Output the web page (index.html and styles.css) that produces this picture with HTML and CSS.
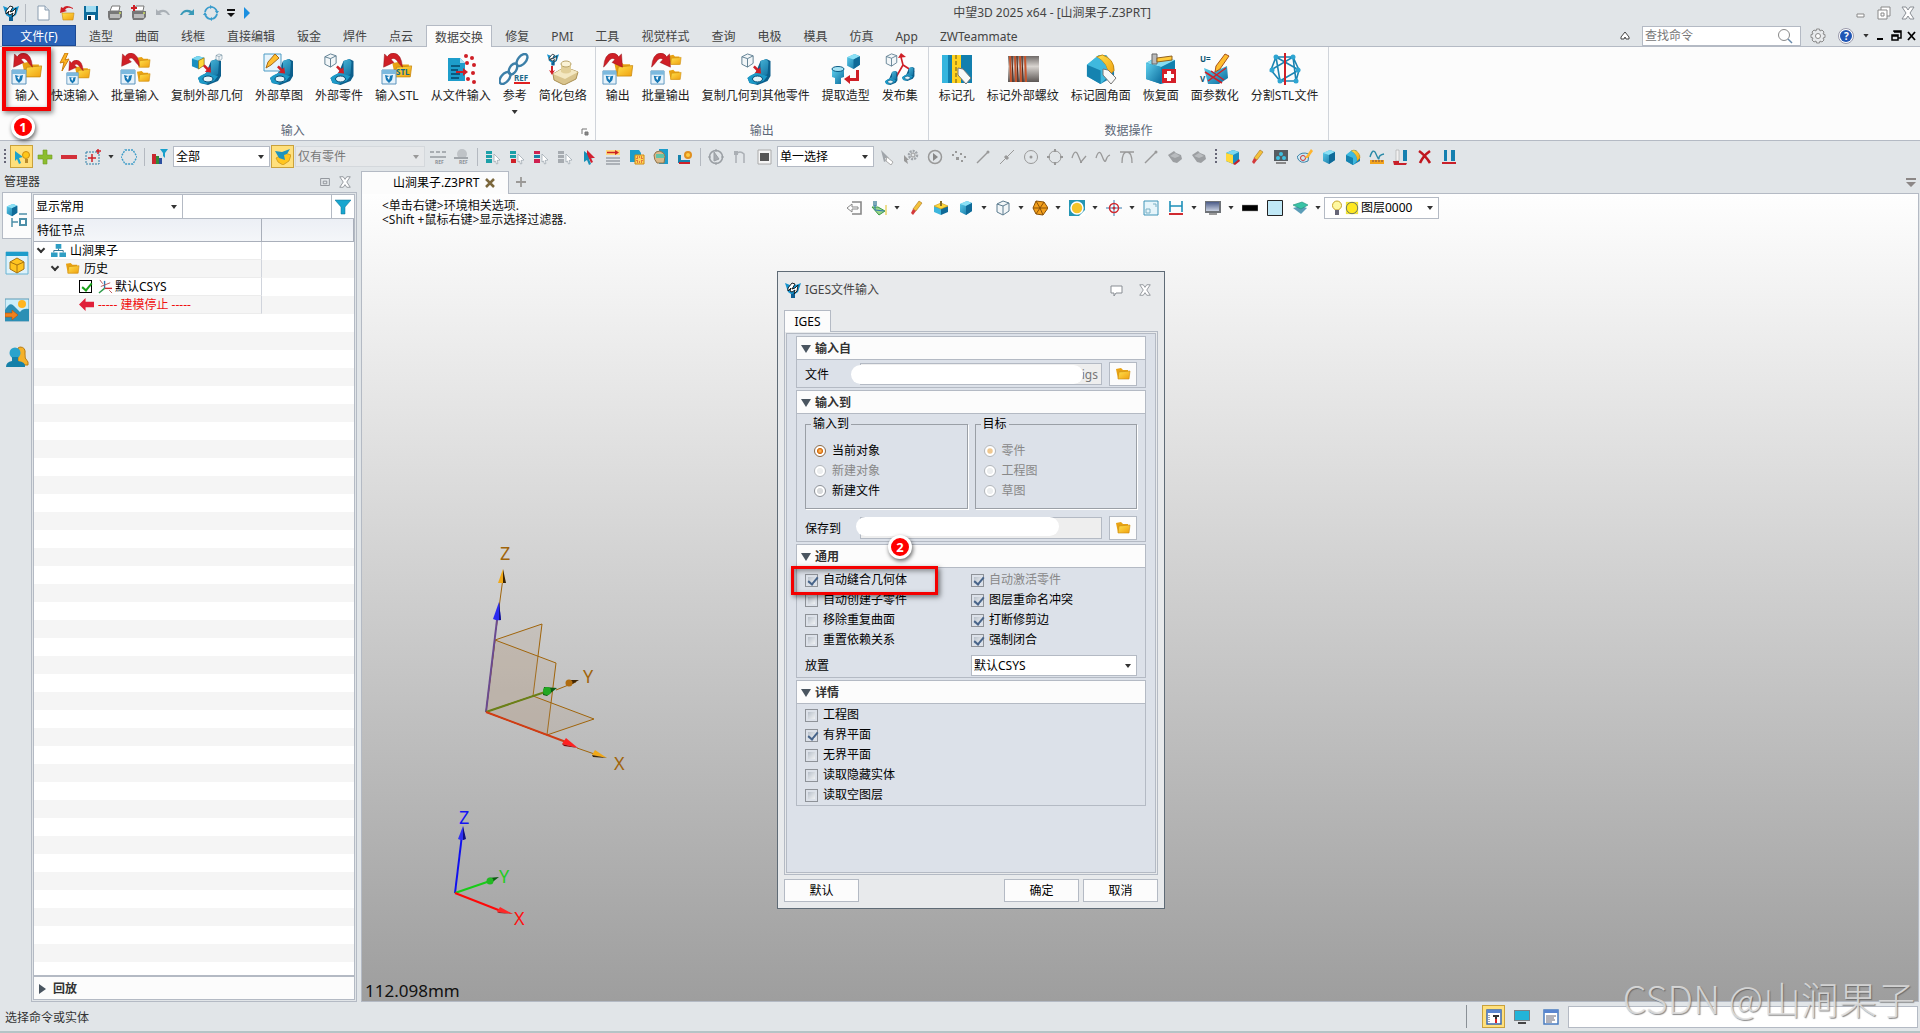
FILE: index.html
```html
<!DOCTYPE html>
<html lang="zh-CN">
<head>
    <meta charset="UTF-8">
    <meta name="viewport" content="width=device-width, initial-scale=1.0">
    <title>中望3D 2025 x64 - [山涧果子.Z3PRT]</title>
    <link rel="stylesheet" href="styles.css">
</head>
<body>
    <!-- 图标定义 -->
    <svg class="defs" width="0" height="0" aria-hidden="true">
        <defs>
            <linearGradient id="gBlue" x1="0" y1="0" x2="1" y2="1"><stop offset="0" stop-color="#5fd0ee"/><stop offset="1" stop-color="#0b6b9c"/></linearGradient>
            <linearGradient id="gGold" x1="0" y1="0" x2="1" y2="1"><stop offset="0" stop-color="#ffe14d"/><stop offset="1" stop-color="#f0a010"/></linearGradient>
            <linearGradient id="gSteel" x1="0" y1="0" x2="0" y2="1"><stop offset="0" stop-color="#6f6a68"/><stop offset=".4" stop-color="#d8d4d0"/><stop offset="1" stop-color="#5c5654"/></linearGradient>
            <linearGradient id="gScreen" x1="0" y1="0" x2="0" y2="1"><stop offset="0" stop-color="#4c5c88"/><stop offset="1" stop-color="#c8d0e0"/></linearGradient>
        </defs>
        <symbol id="logo" viewBox="0 0 16 16"><path d="M0 1l5 2 3-2 3 2 5-2-3 9-3 2v3H6v-3l-3-2z" fill="#1493cf"/><path d="M6 12h4v4H6z" fill="#0d5f93"/><path d="M3 6l4-5 3 1-3 5 3-1 3-3-1 6-3 3 1-4-3 2-2-1 1-3-3 3z" fill="#fff" stroke="#111" stroke-width=".9"/></symbol>
        <symbol id="cube" viewBox="0 0 16 16"><path d="M2 4l7-3 5 2v8l-6 4-6-3z" fill="url(#gBlue)"/><path d="M2 4l7-3 5 2-6 3z" fill="#8be0f5"/><path d="M8 6l6-3v8l-6 4z" fill="#0f6a98"/></symbol>
        <symbol id="cube-gold" viewBox="0 0 16 16"><path d="M1 4l7-3 6 2v9l-6 3-7-3z" fill="#1a8fc0"/><path d="M1 4l7-3 6 2-6 3z" fill="#7bd8f0"/><path d="M1 4l7 2v9l-7-3z" fill="#ffd83a"/><path d="M8 15l6-5 1 2-5 4z" fill="#c3202a"/></symbol>
        <symbol id="cube-face" viewBox="0 0 16 16"><path d="M1 4l6-3 7 2v8l-6 4-7-3z" fill="#1a8fc0"/><path d="M1 4l6-3 7 2-6 3z" fill="#7bd8f0"/><path d="M8 6l6-3v8l-6 4z" fill="#ffd83a" stroke="#8a6a10" stroke-width=".7"/></symbol>
        <symbol id="cube-top" viewBox="0 0 16 16"><path d="M1 6l7 2v7l-7-3z" fill="#3db6dd"/><path d="M8 8l7-2v6l-7 3z" fill="#0f6a98"/><path d="M1 6l7-3 7 3-7 3z" fill="#ffd83a" stroke="#c79310" stroke-width=".6"/><path d="M7 1h2v5H7z" fill="#8a6d20"/></symbol>
        <symbol id="cube-half" viewBox="0 0 16 16"><path d="M1 6l6-5 4 0 4 6v5l-7 4-7-4z" fill="url(#gBlue)"/><path d="M6 2l3-1q6 2 6 8l-3 3q0-7-6-10z" fill="url(#gGold)" stroke="#c98a10" stroke-width=".5"/><path d="M1 6l5-4q6 3 6 10l-4 4V9z" fill="#3fb9de"/><path d="M1 6l7 3v7l-7-4z" fill="#1583b0"/></symbol>
        <symbol id="cube-line" viewBox="0 0 16 16"><path d="M2 4l6-3 6 2v8l-6 4-6-3z" fill="#f2f6f8" stroke="#5d7d90"/><path d="M2 4l6 2 6-3M8 6v9" fill="none" stroke="#5d7d90"/></symbol>
        <symbol id="folder" viewBox="0 0 16 16"><path d="M1 3l5-1 2 2h5v9H3z" fill="#e8a213"/><path d="M4 6l11-1-1 8H3z" fill="url(#gGold)" stroke="#c98a10" stroke-width=".6"/></symbol>
        <symbol id="docbox" viewBox="0 0 16 16"><path d="M1 1h14v14H1z" fill="#e6f2fa" stroke="#5a93bd"/><path d="M1 1h14v4H1z" fill="#7cb9de"/><path d="M4 6l4 1 4-1-1 5-3 3-3-3z" fill="#1678b5"/><path d="M6 8l3-1-1 4z" fill="#fff"/></symbol>
        <symbol id="bracket" viewBox="0 0 24 26"><path d="M13 2l6-2 4 2v15l-3 5-10 4-8-2-2-5 8-5z" fill="#0c5f8c"/><path d="M13 2l6-2 2 3-1 12-8 5-12 0 8-6 5-3z" fill="url(#gBlue)"/><path d="M0 19q5-5 12-4l8 2-4 5-8 3-6-1z" fill="#1c9ac8"/><ellipse cx="10" cy="20" rx="5" ry="3" fill="#e4f4fa" stroke="#0b4d73"/></symbol>
        <symbol id="redarc" viewBox="0 0 20 18"><path d="M20 15Q19 1 11 0 6 0 4 4L1 1 0 15 11 10 8 7Q11 4 14 8 16 11 20 15z" fill="#cf1f26" stroke="#8f1218" stroke-width=".5"/></symbol>
        <symbol id="redto" viewBox="0 0 10 10"><path d="M0 2L2 0l4 4 2-2 1 7-7-1 2-2z" fill="#cf1f26"/></symbol>

        <symbol id="import" viewBox="0 0 32 32"><use href="#folder" x="10" y="6" width="22" height="22"/><use href="#redarc" x="2" y="0" width="20" height="17"/><use href="#docbox" x="0" y="16" width="16" height="16"/></symbol>
        <symbol id="quick" viewBox="0 0 32 32"><path d="M6 0L1 10l4-1-2 9L10 6 6 7l3-7z" fill="#ffb51f" stroke="#c77b10"/><use href="#folder" x="15" y="11" width="17" height="17"/><use href="#redarc" x="9" y="7" width="16" height="13"/><use href="#docbox" x="7" y="19" width="13" height="13"/></symbol>
        <symbol id="batch" viewBox="0 0 32 32"><use href="#folder" x="17" y="2" width="15" height="15"/><use href="#folder" x="17" y="16" width="15" height="15"/><use href="#redarc" x="2" y="0" width="19" height="16"/><use href="#docbox" x="1" y="16" width="16" height="16"/></symbol>
        <symbol id="copygeo" viewBox="0 0 32 32"><use href="#bracket" x="6" y="6" width="26" height="26"/><use href="#cube-face" x="0" y="2" width="15" height="15"/><use href="#cube-line" x="24" y="0" width="8" height="9"/><use href="#redto" x="12" y="11" width="9" height="10"/></symbol>
        <symbol id="sketch" viewBox="0 0 32 32"><use href="#bracket" x="6" y="6" width="26" height="26"/><path d="M1 1h17v17H1z" fill="#e6f4fc" stroke="#4f9cc5"/><path d="M3 15l2-6 7-8 4 4-8 7z" fill="#ffbd2e" stroke="#a86a18"/><use href="#redto" x="14" y="12" width="9" height="10"/></symbol>
        <symbol id="part" viewBox="0 0 32 32"><use href="#bracket" x="7" y="6" width="25" height="26"/><use href="#cube-line" x="0" y="0" width="15" height="15"/><use href="#redto" x="13" y="12" width="9" height="10"/></symbol>
        <symbol id="stl" viewBox="0 0 32 32"><use href="#import" width="32" height="32"/><text x="15" y="22" font-size="8" font-weight="700" fill="#0c6a8c">STL</text></symbol>
        <symbol id="fromfile" viewBox="0 0 32 32"><path d="M3 5h12l5 5v18H3z" fill="#1d9dcb"/><path d="M15 5v5h5" fill="#a9e2f4"/><path d="M6 13h9M6 17h7M6 21h9M6 25h8" stroke="#0a5a80" stroke-width="2"/><path d="M11 18h7v-3l5 4-5 4v-3h-7z" fill="#cf1f26"/><g fill="#cf1f26"><circle cx="21" cy="3" r="2"/><circle cx="27" cy="5" r="2"/><circle cx="22" cy="10" r="2"/><circle cx="29" cy="12" r="2"/><circle cx="28" cy="20" r="2"/><circle cx="23" cy="26" r="2"/><circle cx="29" cy="29" r="2"/></g></symbol>
        <symbol id="ref" viewBox="0 0 32 32"><g fill="none" stroke="#3c7fa8" stroke-width="2.4"><ellipse cx="23" cy="7" rx="4" ry="7" transform="rotate(40 23 7)"/><ellipse cx="14" cy="16" rx="3.500" ry="6" transform="rotate(30 14 16)"/><ellipse cx="6" cy="25" rx="4" ry="7" transform="rotate(40 6 25)"/></g><text x="15" y="28" font-size="8" font-weight="700" fill="#1f6a8a">REF</text><path d="M15 30h16" stroke="#e02020" stroke-width="2"/></symbol>
        <symbol id="simplify" viewBox="0 0 32 32"><path d="M6 21l12-7 13 5-2 7-12 6-10-5z" fill="#d9c48d" stroke="#a98f52"/><path d="M6 21l12-7 13 5-13 7z" fill="#f4e8c2"/><path d="M14 11v8q5 3 10 0v-8z" fill="#e2cf98"/><ellipse cx="19" cy="11" rx="5" ry="3" fill="#fbf3d6" stroke="#b9a369"/><use href="#logo" x="0" y="0" width="12" height="13"/><path d="M4 13v5l-2-1 3 5 3-5-2 1v-5z" fill="#cf1f26"/></symbol>
        <symbol id="export" viewBox="0 0 32 32"><use href="#folder" x="11" y="6" width="21" height="21"/><use href="#redarc" x="-21" y="0" width="20" height="17" transform="scale(-1 1)"/><use href="#docbox" x="0" y="17" width="15" height="15"/></symbol>
        <symbol id="batchout" viewBox="0 0 32 32"><use href="#folder" x="18" y="0" width="14" height="14"/><use href="#folder" x="18" y="15" width="14" height="14"/><use href="#redarc" x="-21" y="0" width="20" height="17" transform="scale(-1 1)"/><use href="#docbox" x="0" y="17" width="15" height="15"/></symbol>
        <symbol id="extract" viewBox="0 0 32 32"><use href="#cube" x="15" y="0" width="17" height="17"/><path d="M2 16h12v8l-3 1v6H5v-6l-3-1z" fill="url(#gBlue)"/><ellipse cx="8" cy="16" rx="6" ry="2.500" fill="#a5e3f4" stroke="#0b5b86"/><path d="M26 17h3v11H20v3l-6-5 6-4v3h6z" fill="#cf1f26"/></symbol>
        <symbol id="publish" viewBox="0 0 32 32"><path d="M11 26L19 12l11 7M19 12l-2-8" fill="none" stroke="#cf1f26" stroke-width="1.600"/><path d="M14 5l3-5 5 4z" fill="#cf1f26"/><use href="#cube-line" x="0" y="0" width="15" height="14"/><use href="#bracket" x="0" y="18" width="15" height="14"/><use href="#bracket" x="17" y="14" width="15" height="14"/></symbol>
        <symbol id="hole" viewBox="0 0 32 32"><path d="M1 2h30v28H1z" fill="#127fae"/><path d="M1 2h6v28H1z" fill="#35b5de"/><path d="M11 2h9v28h-9z" fill="#ffd21f"/><path d="M15 2v28" stroke="#6a5410" stroke-dasharray="4 2"/><path d="M17 15l5 1 8 9-5 6-8-9z" fill="#f8f8f8" stroke="#777"/></symbol>
        <symbol id="thread" viewBox="0 0 32 32"><path d="M1 3h31v26H1z" fill="url(#gSteel)"/><path d="M3 3l1 26M8 3l1 26M13 3l1 26M18 3l1 26" stroke="#c8562c" stroke-width="2"/><path d="M5 3l1 26M10 3l1 26M15 3l1 26" stroke="#4c2418"/></symbol>
        <symbol id="fillet" viewBox="0 0 32 32"><use href="#cube-half" width="31" height="31"/><path d="M18 16l5 1 8 8-5 6-8-9z" fill="#f8f8f8" stroke="#777"/></symbol>
        <symbol id="heal" viewBox="0 0 32 32"><path d="M1 10l9-5 20 2v20l-14 4-15-5z" fill="#1280ae"/><path d="M1 10l9-5 20 2-14 7z" fill="#86dcf2"/><path d="M1 10l15 4v17L1 26z" fill="url(#gBlue)"/><path d="M7 1h5v10H7z" fill="#bbb" stroke="#666"/><path d="M12 5l15-2v4L12 9z" fill="#ffca3a" stroke="#906020"/><path d="M17 16h14v14H17z" fill="#d5202a"/><path d="M22 18h4v3h3v4h-3v3h-4v-3h-3v-4h3z" fill="#fff"/></symbol>
        <symbol id="param" viewBox="0 0 32 32"><path d="M5 15l10 4 13-6 1 12-9 6H9z" fill="url(#gBlue)"/><path d="M6 19l17 11M9 28l18-13M12 18l13 9" stroke="#cf1f26" stroke-width="1.500"/><path d="M16 19l1-6L26 1l4 2-9 13z" fill="#ffbd2e" stroke="#a8541a"/><text x="1" y="9" font-size="8" font-weight="700" fill="#0c5573">U=</text><text x="1" y="29" font-size="8" font-weight="700" fill="#0c5573">V</text></symbol>
        <symbol id="split" viewBox="0 0 32 32"><path d="M7 4h17l6 13-3 11H11L2 17zM7 4l4 24 19-11L7 4 2 17l22-13 3 24" fill="none" stroke="#1a84b2" stroke-width="1.600"/><g fill="#2ea5d2"><circle cx="7" cy="4" r="2.500"/><circle cx="24" cy="4" r="2.500"/><circle cx="29" cy="17" r="2.500"/><circle cx="27" cy="28" r="2.500"/><circle cx="11" cy="28" r="2.500"/><circle cx="3" cy="17" r="2.500"/></g><path d="M16 0v32" stroke="#cf1f26" stroke-width="2"/></symbol>

        <symbol id="new" viewBox="0 0 16 16"><path d="M3 1h7l4 4v10H3z" fill="#fff" stroke="#8a9db0"/><path d="M10 1v4h4" fill="#dde6ee" stroke="#8a9db0"/></symbol>
        <symbol id="open" viewBox="0 0 16 16"><path d="M3 8h12l-1 7H4z" fill="url(#gGold)" stroke="#c98a10" stroke-width=".6"/><path d="M14 4Q8 1 6 5l2 1-7 2 1-6 2 1q3-4 10 0z" fill="#cf1f26"/></symbol>
        <symbol id="save" viewBox="0 0 16 16"><path d="M1 1h14v14H1z" fill="#0c6a9a"/><path d="M3 1h10v6H3z" fill="#9fdcf2"/><path d="M4 10h8v5H4z" fill="#fff"/><path d="M5 11h3v4H5z" fill="#123"/></symbol>
        <symbol id="print" viewBox="0 0 16 16"><path d="M5 1h8l-1 5H3z" fill="#fff" stroke="#777"/><path d="M1 6h14v6l-3 3H2l-1-3z" fill="#777"/><path d="M3 9h10v4H3z" fill="#bbb"/><circle cx="13" cy="8" r="1" fill="#cce060"/></symbol>
        <symbol id="print-add" viewBox="0 0 16 16"><use href="#print" width="16" height="16"/><path d="M2 0h2v2h2v2H4v2H2V4H0V2h2z" fill="#cf1f26"/></symbol>
        <symbol id="undo" viewBox="0 0 16 16"><path d="M1 4v6h6L5 8q5-3 8 2h2Q11 2 3 6z" fill="#aab0b6"/></symbol>
        <symbol id="redo" viewBox="0 0 16 16"><path d="M15 4v6H9l2-2Q6 5 3 10H1Q5 2 13 6z" fill="#3a9ab8"/></symbol>
        <symbol id="refresh" viewBox="0 0 16 16"><path d="M9 2q4 1 5 5M14 9q-1 4-5 5M7 14q-4-1-5-5M2 7q1-4 5-5" fill="none" stroke="#3a9ccc" stroke-width="1.800"/><path d="M12 6h4l-2 3zM9 12v4l-3-2zM0 10h4L2 7zM7 0v4l3-2z" fill="#3a9ccc"/></symbol>
        <symbol id="dotcaret" viewBox="0 0 16 16"><path d="M4 4h8v2H4zM4 8h8l-4 4z" fill="#111"/></symbol>
        <symbol id="play" viewBox="0 0 16 16"><path d="M5 2l6 6-6 6z" fill="#1a8fe0"/></symbol>
        <symbol id="win-min" viewBox="0 0 16 16"><path d="M5 9h7v3H5z" fill="#fff" stroke="#888"/></symbol>
        <symbol id="win-max" viewBox="0 0 16 16"><path d="M5 2h9v9h-3v3H2V5h3z" fill="#fff" stroke="#888"/><path d="M5 5h6v6M5 8h3v3H5z" fill="none" stroke="#888"/></symbol>
        <symbol id="win-x" viewBox="0 0 16 16"><path d="M2 2h4l2 3 2-3h4l-4 6 4 6h-4l-2-3-2 3H2l4-6z" fill="#fff" stroke="#8a8f95"/></symbol>
        <symbol id="mdi-min" viewBox="0 0 16 16"><path d="M5 10h6v2H5z"/></symbol>
        <symbol id="mdi-max" viewBox="0 0 16 16"><path d="M6 4V3h7v7h-3M6 4h7M4 7h6v5H4zM4 8h6" fill="none" stroke="#000" stroke-width="1.500"/></symbol>
        <symbol id="mdi-x" viewBox="0 0 16 16"><path d="M4 4l7 8M11 4l-7 8" stroke="#000" stroke-width="1.800"/></symbol>
        <symbol id="home" viewBox="0 0 16 16"><path d="M4 9l4-5 4 5v2H9L8 9l-1 2H4z" fill="#fff" stroke="#444"/></symbol>
        <symbol id="search" viewBox="0 0 16 16"><circle cx="7" cy="7" r="5.500" fill="none" stroke="#888"/><path d="M11 11l4 4" stroke="#68a" stroke-width="1.500"/></symbol>
        <symbol id="gear" viewBox="0 0 16 16"><path d="M6.500 1h3l.5 2 2-1 2 2-1 2 2 .5v3L13 10l1 2-2 2-2-1-.5 2h-3L6 13l-2 1-2-2 1-2-2-.5v-3L3 6 2 4l2-2 2 1z" fill="#e8eaec" stroke="#8a8a8a"/><circle cx="8" cy="8" r="2.500" fill="#fff" stroke="#8a8a8a"/></symbol>
        <symbol id="help" viewBox="0 0 16 16"><circle cx="8" cy="8" r="7.500" fill="#fff" stroke="#99a"/><circle cx="8" cy="8" r="6" fill="#1f56b5"/><text x="6" y="12" font-size="10" font-weight="700" fill="#fff">?</text></symbol>

        <symbol id="bulb-sel" viewBox="0 0 16 16"><path d="M1 2l8 6-4 1 2 5-2 1-2-5-2 2z" fill="#1ba3cc"/><circle cx="12" cy="6" r="3.500" fill="#ffc61a" stroke="#d08f10"/><path d="M11 10h3v4h-3z" fill="#b98a2a"/></symbol>
        <symbol id="plus" viewBox="0 0 16 16"><path d="M6 1h4v5h5v4h-5v5H6v-5H1V6h5z" fill="#8cbd2f" stroke="#6f9a22" stroke-width=".6"/></symbol>
        <symbol id="minus" viewBox="0 0 16 16"><path d="M0 6h16v4H0z" fill="#d3303a"/></symbol>
        <symbol id="selbox" viewBox="0 0 16 16"><path d="M1 3h13v12H1z" fill="none" stroke="#3080a8" stroke-dasharray="2 1"/><path d="M7 5v8M3 9h8M13 0v5M11 2h5" stroke="#d02028" stroke-width="1.500"/></symbol>
        <symbol id="hexsel" viewBox="0 0 16 16"><path d="M4 1h8l4 7-4 7H4L0 8z" fill="none" stroke="#3d9cc8" stroke-width="1.400" stroke-dasharray="2 1"/></symbol>
        <symbol id="barfilter" viewBox="0 0 16 16"><path d="M0 5h4v10H0z" fill="#c9282e"/><path d="M4 7h3v8H4z" fill="#2e8a3a"/><path d="M7 9h3v6H7z" fill="#2c4fa0"/><path d="M8 0h8l-3 4v5l-2-2V4z" fill="#18a0cc"/></symbol>
        <symbol id="partsel" viewBox="0 0 16 16"><path d="M1 9l9-5 6 2-2 6-6 4-5-3z" fill="#ffc51f" stroke="#b98312" stroke-width=".6"/><path d="M0 2l7 1 8-3-3 5-3 1 1 5-6-2z" fill="#1d93bd"/></symbol>
        <symbol id="chain-g" viewBox="0 0 16 16"><path d="M0 3h4M6 3h4M12 3h4M0 8h16" stroke="#a8adb2" stroke-width="2"/><text x="5" y="15" font-size="5" font-weight="700" fill="#8d9298">REF</text></symbol>
        <symbol id="dome-g" viewBox="0 0 16 16"><circle cx="8" cy="5" r="5" fill="#bfc3c7"/><path d="M0 8h14v2H0z" fill="#a0a5aa"/><text x="5" y="15" font-size="5" font-weight="700" fill="#8d9298">REF</text></symbol>
        <symbol id="cur-w" viewBox="0 0 16 16"><path d="M9 5l6 6-3 .5 1 3-1.500.5-1-3L9 13z" fill="#fff" stroke="#9aa4ac" stroke-width=".7"/></symbol>
        <symbol id="list-a" viewBox="0 0 16 16"><path d="M1 2h6v3H1zM1 6h6v3H1zM1 10h6v4H1z" fill="#1ca0a8"/><use href="#cur-w" width="16" height="16"/></symbol>
        <symbol id="list-b" viewBox="0 0 16 16"><path d="M1 2h6v3H1zM1 6h6v3H1z" fill="#1ca0a8"/><path d="M2 10h5v4H2z" fill="#cf2028"/><use href="#cur-w" width="16" height="16"/></symbol>
        <symbol id="list-c" viewBox="0 0 16 16"><path d="M1 2h6v3H1zM1 10h6v4H1z" fill="#cf2050"/><path d="M1 6h6v3H1z" fill="#1c80a8"/><use href="#cur-w" width="16" height="16"/></symbol>
        <symbol id="list-g" viewBox="0 0 16 16"><path d="M1 2h6v3H1zM1 6h6v3H1zM1 10h6v4H1z" fill="#a6abb0"/><use href="#cur-w" width="16" height="16"/></symbol>
        <symbol id="cur-red" viewBox="0 0 16 16"><path d="M3 2l9 7-4 1 2 5-2 1-2-5-3 2z" fill="#1790b8"/><path d="M6 1l8 8-4 0 2 4-2 1-4-9z" fill="#d32030"/></symbol>
        <symbol id="lines" viewBox="0 0 16 16"><path d="M1 1h14v5H1z" fill="#ffd97a"/><path d="M2 3.500h9" stroke="#c22" stroke-width="1.500"/><path d="M10 1l4 2.500L10 6z" fill="#c22"/><path d="M1 9h14M1 12h14M1 15h14" stroke="#9aa0a6" stroke-width="1.500"/></symbol>
        <symbol id="sheet-sel" viewBox="0 0 16 16"><path d="M1 1h9l2 3v9H1z" fill="#1d9dcb"/><path d="M6 6h9v9H6z" fill="#ffd35a" stroke="#d08a10"/><path d="M8 8h5v5H8z" fill="none" stroke="#c22" stroke-dasharray="1 1"/></symbol>
        <symbol id="sheet-hand" viewBox="0 0 16 16"><path d="M6 0h9v15H6z" fill="#1d9dcb"/><path d="M1 6q1-4 6-4 4 1 5 5l-1 7H4q-3-3-3-8z" fill="#d9b98a" stroke="#8f744c"/><path d="M3 5h8v4H3z" fill="#62c4a8"/></symbol>
        <symbol id="gear-l" viewBox="0 0 16 16"><path d="M1 6h3v5h9v3H1z" fill="#1783ac"/><path d="M2 13h11v2H2z" fill="#cf2028"/><circle cx="11" cy="6" r="3" fill="#ffcc44" stroke="#e09020" stroke-width="2"/></symbol>
        <symbol id="compass" viewBox="0 0 16 16"><circle cx="8" cy="8" r="6.500" fill="none" stroke="#9a9fa4" stroke-width="1.500"/><path d="M6 3l5 7-5 2zM8 0v3M8 13v3M0 8h3M13 8h3" fill="#a7abb0" stroke="#9a9fa4"/></symbol>
        <symbol id="pipe" viewBox="0 0 16 16"><path d="M4 14V5q4-4 8 0v9" fill="none" stroke="#aaafb4" stroke-width="1.500"/><path d="M2 2h4v4H2z" fill="#aaafb4"/></symbol>
        <symbol id="square" viewBox="0 0 16 16"><path d="M2 1h13v14H2z" fill="#f5f5f5" stroke="#aaa"/><path d="M4 4h9v8H4z" fill="#555"/></symbol>
        <symbol id="cur-gray" viewBox="0 0 16 16"><path d="M2 1l8 8-4 0 1 3-2 1z" fill="#a0a5aa"/><path d="M8 8l6 5-2 3-5-4z" fill="#fff" stroke="#aaa"/></symbol>
        <symbol id="gear-gray" viewBox="0 0 16 16"><circle cx="10" cy="6" r="4" fill="none" stroke="#a0a5aa" stroke-width="2.500" stroke-dasharray="2 1"/><circle cx="10" cy="6" r="2" fill="none" stroke="#999"/><path d="M1 6l5 5-2 0 1 4-4-3z" fill="#999"/></symbol>
        <symbol id="play-gray" viewBox="0 0 16 16"><circle cx="8" cy="8" r="6.500" fill="none" stroke="#999" stroke-width="1.500"/><path d="M6 4l5 4-5 4z" fill="#888"/></symbol>
        <symbol id="points" viewBox="0 0 16 16"><path d="M1 5h2v2H1zM5 8h3v3H5zM9 4h2v2H9zM13 7h2v2h-2zM4 2h2v2H4zM10 11h2v2h-2z" fill="#999"/></symbol>
        <symbol id="line1" viewBox="0 0 16 16"><path d="M2 14L13 3" stroke="#999" stroke-width="1.500"/><circle cx="13" cy="3" r="1.500" fill="#999"/></symbol>
        <symbol id="line2" viewBox="0 0 16 16"><path d="M1 15L15 1" stroke="#999"/><path d="M6 7l3 3" stroke="#999" stroke-width="3"/></symbol>
        <symbol id="circ1" viewBox="0 0 16 16"><circle cx="8" cy="8" r="6.500" fill="none" stroke="#999"/><circle cx="8" cy="8" r="1.500" fill="#999"/></symbol>
        <symbol id="circ2" viewBox="0 0 16 16"><circle cx="8" cy="8" r="6" fill="none" stroke="#999"/><path d="M7 0h2v3H7zM7 13h2v3H7zM0 7h3v2H0zM13 7h3v2h-3z" fill="#999"/></symbol>
        <symbol id="spl1" viewBox="0 0 16 16"><path d="M1 9q3-10 6-3t3 7 5-6" fill="none" stroke="#999" stroke-width="1.300"/><path d="M9 12h2v2H9z" fill="#999"/></symbol>
        <symbol id="spl2" viewBox="0 0 16 16"><path d="M1 9q3-10 6-2t4 4 4-5" fill="none" stroke="#999" stroke-width="1.300"/></symbol>
        <symbol id="arc" viewBox="0 0 16 16"><path d="M1 3h14M3 14Q3 3 8 3t5 11" fill="none" stroke="#999" stroke-width="1.300"/></symbol>
        <symbol id="blob" viewBox="0 0 16 16"><path d="M1 6l6-4 2 2 5 2 1 4-5 4-4-1z" fill="#9c9fa2"/><path d="M3 7l5-3 5 3-5 2z" fill="#b9bcbf"/></symbol>
        <symbol id="eraser" viewBox="0 0 16 16"><path d="M5 9l6-8 3 2-6 8z" fill="#f4c13a" stroke="#a67420" stroke-width=".6"/><path d="M5 9l3 2-3 4-2-2z" fill="#d33a3a"/></symbol>
        <symbol id="monitor-b" viewBox="0 0 16 16"><path d="M1 1h14v11H1z" fill="#555b60"/><path d="M3 13h10v2H3z" fill="#888"/><circle cx="8" cy="5" r="2" fill="#3fc0e0"/><circle cx="5" cy="9" r="2" fill="#3fc0e0"/><circle cx="11" cy="9" r="2" fill="#3fc0e0"/></symbol>
        <symbol id="target-p" viewBox="0 0 16 16"><path d="M0 8q4-6 12-3l-1 7q-8 4-11-4z" fill="#cfe6f0" stroke="#3f84a8"/><circle cx="6" cy="9" r="2.500" fill="none" stroke="#c33"/><path d="M8 9l6-9 2 2-5 7z" fill="#ffb52e"/></symbol>
        <symbol id="wave-r" viewBox="0 0 16 16"><path d="M1 8q3-10 6-3t3 4 5-4" fill="none" stroke="#2a8aa8" stroke-width="1.400"/><path d="M1 11h14v4H1z" fill="#f2a41c"/><path d="M4 11v2M7 11v2M10 11v2M13 11v2" stroke="#744"/></symbol>
        <symbol id="pillar1" viewBox="0 0 16 16"><path d="M3 1h3v11H3z" fill="#f1f1f1" stroke="#aaa" stroke-width=".6"/><path d="M10 1h4v11h-4z" fill="#1580b0"/><path d="M0 12h6v-1l0 3h8l-1 2H1z" fill="#c8202a"/></symbol>
        <symbol id="pillar2" viewBox="0 0 16 16"><path d="M3 1h3v11H3zM10 1h4v11h-4z" fill="#1580b0"/><path d="M1 13h14v2H1z" fill="#c8202a"/></symbol>
        <symbol id="redx" viewBox="0 0 16 16"><path d="M2 2q6 4 11 12M13 2Q6 7 3 14" fill="none" stroke="#c0161e" stroke-width="2.600"/></symbol>

        <symbol id="exit" viewBox="0 0 16 16"><path d="M6 2h9v12H6" fill="none" stroke="#888" stroke-width="1.600"/><path d="M12 7H6V4L1 8l5 4V9h6z" fill="#fff" stroke="#888"/></symbol>
        <symbol id="csys-v" viewBox="0 0 16 16"><path d="M2 1h4v5H2z" fill="#7ba7b8"/><path d="M1 7l6 0 7 4-6 4z" fill="#9bd48b" stroke="#3a9a48"/><path d="M4 5v5l9 1" fill="none" stroke="#2a78b0"/><path d="M15 5v10" stroke="#e0c020"/></symbol>
        <symbol id="orange" viewBox="0 0 16 16"><path d="M4 1l8 1 4 6-5 7-7-1-3-6z" fill="#f4a01c" stroke="#8a5208"/><path d="M4 1l4 7 4-6M1 8h7l8 0M8 8l3 7M8 8l-4 6" stroke="#8a5208" fill="none"/></symbol>
        <symbol id="tealring" viewBox="0 0 16 16"><path d="M0 0h16v16H0z" fill="#2496b4"/><circle cx="8" cy="8" r="6" fill="#f5c42a" stroke="#fff" stroke-width="1.500"/><path d="M10 16l6-6v6z" fill="#fff"/></symbol>
        <symbol id="cross" viewBox="0 0 16 16"><path d="M8 0v16M0 8h16" stroke="#357bb0"/><circle cx="8" cy="8" r="4.500" fill="none" stroke="#d02a30" stroke-width="1.500"/><circle cx="8" cy="8" r="1.500" fill="#d02a30"/></symbol>
        <symbol id="fit" viewBox="0 0 16 16"><path d="M1 1h14v14H1z" fill="#e6f5fb" stroke="#4095b8"/><path d="M3 9h4v4H3zM10 4h3v3" fill="none" stroke="#7ab0c4"/></symbol>
        <symbol id="measure" viewBox="0 0 16 16"><path d="M2 1v11M14 1v11M2 6h12" stroke="#1d8fb8" stroke-width="1.600"/><path d="M1 13h14v2H1z" fill="#d02a30"/></symbol>
        <symbol id="monitor-v" viewBox="0 0 16 16"><path d="M0 1h16v12H0z" fill="#6f7378"/><path d="M1 2h13v9H1z" fill="url(#gScreen)"/><path d="M4 13h8v2H4z" fill="#999"/></symbol>
        <symbol id="black" viewBox="0 0 16 16"><path d="M0 5h16v6H0z" stroke="#999" stroke-width=".5"/></symbol>
        <symbol id="cyan" viewBox="0 0 16 16"><path d="M.5.5h15v15H.5z" fill="#c0e8f6" stroke="#222"/></symbol>
        <symbol id="layers" viewBox="0 0 16 16"><path d="M1 8l8-2 6 2-6 6z" fill="#5c9db8"/><path d="M1 5l9-3 6 3-7 4z" fill="#39c3a6" stroke="#1f8d77" stroke-width=".6"/></symbol>
        <symbol id="bulb" viewBox="0 0 16 16"><circle cx="8" cy="5.500" r="4.500" fill="#fff8a0" stroke="#c7a52a"/><path d="M6 10h4v5H6z" fill="#667"/></symbol>
        <symbol id="sun" viewBox="0 0 16 16"><path d="M1 1h14v14H1z" fill="#f0e23a"/><circle cx="8" cy="8" r="6.500" fill="#ffe81f" stroke="#5a6a70"/></symbol>
        <symbol id="menu-r" viewBox="0 0 16 16"><path d="M3 4h10v2H3zM3 8h10l-5 5z" fill="#8c8786"/></symbol>

        <symbol id="tree-tab" viewBox="0 0 24 24"><use href="#cube" x="0" y="-1" width="14" height="14"/><path d="M7 14v9M7 18h6M14 10h8" fill="none" stroke="#4d8fa8" stroke-width="1.500"/><path d="M15 15h6v6h-6z" fill="#fff" stroke="#4d8fa8" stroke-width="2"/></symbol>
        <symbol id="box-tab" viewBox="0 0 24 24"><path d="M1 1h22v22H1z" fill="#dff2fa" stroke="#68b4d4"/><path d="M1 1h22v4H1z" fill="#1d9dcb"/><path d="M5 11l7-4 7 4v7l-7 4-7-4z" fill="#ffc51f" stroke="#a87412"/><path d="M5 11l7 3 7-3M12 14v8" fill="none" stroke="#a87412"/></symbol>
        <symbol id="img-tab" viewBox="0 0 24 24"><path d="M0 1h24v22H0z" fill="#cdeefa" stroke="#5c9ab5"/><path d="M0 12q5-9 9-4l6 6q3-4 9-3v12H0z" fill="#2c8fb5"/><circle cx="17" cy="6" r="4" fill="#ffb51f"/><path d="M0 15h7v-3l6 5-6 5v-3H0z" fill="#f0801c" stroke="#b3500c" stroke-width=".6"/></symbol>
        <symbol id="user-tab" viewBox="0 0 24 24"><path d="M15 2q6 0 5 7-1 4 3 8v3H13V3z" fill="#f4b12a" stroke="#b97c12"/><circle cx="10" cy="8" r="5.500" fill="#2aa3cc"/><path d="M7 12h6v4q8 1 7 6H1q0-5 6-6z" fill="#1580a8"/></symbol>
        <symbol id="nodes" viewBox="0 0 16 16"><path d="M5 1h6v5H5zM0 10h7v5H0zM9 10h7v5H9z" fill="#2f9ec4"/><path d="M8 6v2M3 10V8h10v2" fill="none" stroke="#2f7090"/></symbol>
        <symbol id="csys-t" viewBox="0 0 16 16"><path d="M7 2v8" stroke="#2878b0" stroke-width="1.500"/><path d="M7 10h8" stroke="#d02a30" stroke-width="1.500"/><path d="M7 10l-6 5" stroke="#2e9a4a" stroke-width="1.500"/><path d="M2 1l3 4M12 12l3 3M3 8l10-4" stroke="#b55"/></symbol>
        <symbol id="stop" viewBox="0 0 16 16"><path d="M0 8l7-7v4h9v6H7v4z" fill="#e0203a"/></symbol>
        <symbol id="funnel" viewBox="0 0 16 16"><path d="M0 1h16l-6 7v7H6V8z" fill="#18a6cf" stroke="#0c6f92" stroke-width=".5"/></symbol>
        <symbol id="pin" viewBox="0 0 16 16"><path d="M3 4h10v8H3zM6 7h4v3H6z" fill="none" stroke="#888d93"/></symbol>
        <symbol id="tab-x" viewBox="0 0 16 16"><path d="M4 4l8 8M12 4l-8 8" stroke="#7b673c" stroke-width="2.500"/></symbol>
        <symbol id="tab-plus" viewBox="0 0 16 16"><path d="M8 3v10M3 8h10" stroke="#9b9997" stroke-width="1.800"/></symbol>
        <symbol id="bubble" viewBox="0 0 16 16"><path d="M2 4h11v7H7l-2 3v-3H2z" fill="#fff" stroke="#888d93"/></symbol>
        <symbol id="launch" viewBox="0 0 16 16"><path d="M5 11V6h5" fill="none" stroke="#777"/><path d="M8 9h3v3H8z" fill="#888" stroke="#777"/></symbol>
        <symbol id="st-tool" viewBox="0 0 16 16"><path d="M1 1h14v14H1z" fill="#fff" stroke="#3d68b0" stroke-width="1.500"/><path d="M1 1h14v3H1z" fill="#5a86d0"/><path d="M3 6v8" stroke="#456" stroke-dasharray="1 1"/><path d="M7 6h6v2h-2v6H9V8H7z" fill="#333"/><path d="M9 10h2v4H9z" fill="#d22"/></symbol>
        <symbol id="st-screen" viewBox="0 0 16 16"><path d="M0 1h16v11H0z" fill="#7a8084"/><path d="M1 2h14v9H1z" fill="#22b4d8"/><path d="M4 13h8v2H4z" fill="#444"/></symbol>
        <symbol id="st-doc" viewBox="0 0 16 16"><path d="M1 1h14v14H1z" fill="#fff" stroke="#4a7cc0" stroke-width="1.500"/><path d="M1 1h14v3H1z" fill="#5a86d0"/><path d="M3 7h10M3 9h8M3 11h9M3 13h6" stroke="#667"/></symbol>
    </svg>

    <!-- 标题栏 -->
    <header class="titlebar">
        <div class="quick-access">
            <svg class="icon logo"><use href="#logo"/></svg>
            <span class="sep"></span>
            <button class="tool" aria-label="新建"><svg class="icon"><use href="#new"/></svg></button>
            <button class="tool" aria-label="打开"><svg class="icon"><use href="#open"/></svg></button>
            <button class="tool" aria-label="保存"><svg class="icon"><use href="#save"/></svg></button>
            <button class="tool" aria-label="打印"><svg class="icon"><use href="#print"/></svg></button>
            <button class="tool" aria-label="批量打印"><svg class="icon"><use href="#print-add"/></svg></button>
            <button class="tool" aria-label="撤销"><svg class="icon"><use href="#undo"/></svg></button>
            <button class="tool" aria-label="重做"><svg class="icon"><use href="#redo"/></svg></button>
            <button class="tool" aria-label="刷新"><svg class="icon"><use href="#refresh"/></svg></button>
            <button class="slim" aria-label="自定义"><svg class="icon"><use href="#dotcaret"/></svg></button>
            <button class="slim" aria-label="播放"><svg class="icon"><use href="#play"/></svg></button>
        </div>
        <div class="app-title">中望3D 2025 x64 - [山涧果子.Z3PRT]</div>
        <div class="window-buttons">
            <button class="tool" aria-label="最小化"><svg class="icon"><use href="#win-min"/></svg></button>
            <button class="tool" aria-label="还原"><svg class="icon"><use href="#win-max"/></svg></button>
            <button class="tool" aria-label="关闭"><svg class="icon"><use href="#win-x"/></svg></button>
        </div>
    </header>

    <!-- 菜单 -->
    <nav class="menubar">
        <button class="file-menu">文件(F)</button>
        <button class="menu">造型</button>
        <button class="menu">曲面</button>
        <button class="menu">线框</button>
        <button class="menu">直接编辑</button>
        <button class="menu">钣金</button>
        <button class="menu">焊件</button>
        <button class="menu">点云</button>
        <button class="menu active">数据交换</button>
        <button class="menu">修复</button>
        <button class="menu">PMI</button>
        <button class="menu">工具</button>
        <button class="menu">视觉样式</button>
        <button class="menu">查询</button>
        <button class="menu">电极</button>
        <button class="menu">模具</button>
        <button class="menu">仿真</button>
        <button class="menu">App</button>
        <button class="menu">ZWTeammate</button>
        <div class="menu-right">
            <button class="slim" aria-label="折叠功能区"><svg class="icon"><use href="#home"/></svg></button>
            <div class="search">
                <input type="text" placeholder="查找命令" aria-label="查找命令">
                <svg class="icon"><use href="#search"/></svg>
            </div>
            <button class="tool wide" aria-label="设置"><svg class="icon"><use href="#gear"/></svg></button>
            <button class="tool wide" aria-label="帮助"><svg class="icon"><use href="#help"/></svg></button>
            <span class="caret"></span>
            <button class="slim" aria-label="最小化文档"><svg class="icon"><use href="#mdi-min"/></svg></button>
            <button class="slim" aria-label="还原文档"><svg class="icon"><use href="#mdi-max"/></svg></button>
            <button class="slim" aria-label="关闭文档"><svg class="icon"><use href="#mdi-x"/></svg></button>
        </div>
    </nav>

    <!-- 功能区 -->
    <section class="ribbon">
        <div class="group">
            <div class="group-items">
                <button class="cmd"><svg><use href="#import"/></svg><span>输入</span><i class="mark mark-import"></i><b class="badge badge-one">1</b></button>
                <button class="cmd"><svg><use href="#quick"/></svg><span>快速输入</span></button>
                <button class="cmd"><svg><use href="#batch"/></svg><span>批量输入</span></button>
                <button class="cmd"><svg><use href="#copygeo"/></svg><span>复制外部几何</span></button>
                <button class="cmd"><svg><use href="#sketch"/></svg><span>外部草图</span></button>
                <button class="cmd"><svg><use href="#part"/></svg><span>外部零件</span></button>
                <button class="cmd"><svg><use href="#stl"/></svg><span>输入STL</span></button>
                <button class="cmd"><svg><use href="#fromfile"/></svg><span>从文件输入</span></button>
                <button class="cmd"><svg><use href="#ref"/></svg><span>参考</span><i class="caret"></i></button>
                <button class="cmd"><svg><use href="#simplify"/></svg><span>简化包络</span></button>
            </div>
            <div class="group-name">输入<svg class="icon launch"><use href="#launch"/></svg></div>
        </div>
        <div class="group">
            <div class="group-items">
                <button class="cmd"><svg><use href="#export"/></svg><span>输出</span></button>
                <button class="cmd"><svg><use href="#batchout"/></svg><span>批量输出</span></button>
                <button class="cmd"><svg><use href="#part"/></svg><span>复制几何到其他零件</span></button>
                <button class="cmd"><svg><use href="#extract"/></svg><span>提取造型</span></button>
                <button class="cmd"><svg><use href="#publish"/></svg><span>发布集</span></button>
            </div>
            <div class="group-name">输出</div>
        </div>
        <div class="group">
            <div class="group-items">
                <button class="cmd"><svg><use href="#hole"/></svg><span>标记孔</span></button>
                <button class="cmd"><svg><use href="#thread"/></svg><span>标记外部螺纹</span></button>
                <button class="cmd"><svg><use href="#fillet"/></svg><span>标记圆角面</span></button>
                <button class="cmd"><svg><use href="#heal"/></svg><span>恢复面</span></button>
                <button class="cmd"><svg><use href="#param"/></svg><span>面参数化</span></button>
                <button class="cmd"><svg><use href="#split"/></svg><span>分割STL文件</span></button>
            </div>
            <div class="group-name">数据操作</div>
        </div>
    </section>

    <!-- 选择工具栏 -->
    <div class="toolbar">
        <span class="grip"></span>
        <button class="tool on" aria-label="智能选择"><svg class="icon"><use href="#bulb-sel"/></svg></button>
        <button class="tool" aria-label="添加"><svg class="icon"><use href="#plus"/></svg></button>
        <button class="tool" aria-label="移除"><svg class="icon"><use href="#minus"/></svg></button>
        <button class="tool" aria-label="框选"><svg class="icon"><use href="#selbox"/></svg></button>
        <span class="caret"></span>
        <button class="tool" aria-label="多边形选择"><svg class="icon"><use href="#hexsel"/></svg></button>
        <span class="sep"></span>
        <button class="tool" aria-label="过滤器"><svg class="icon"><use href="#barfilter"/></svg></button>
        <span class="select filter-all"><select aria-label="过滤类型"><option>全部</option></select></span>
        <button class="tool on" aria-label="零件"><svg class="icon"><use href="#partsel"/></svg></button>
        <span class="select filter-part off"><select aria-label="范围" disabled><option>仅有零件</option></select></span>
        <button class="tool" aria-label="链参考"><svg class="icon"><use href="#chain-g"/></svg></button>
        <button class="tool" aria-label="面参考"><svg class="icon"><use href="#dome-g"/></svg></button>
        <span class="sep"></span>
        <button class="tool" aria-label="列表选择"><svg class="icon"><use href="#list-a"/></svg></button>
        <button class="tool" aria-label="列表追加"><svg class="icon"><use href="#list-b"/></svg></button>
        <button class="tool" aria-label="列表移除"><svg class="icon"><use href="#list-c"/></svg></button>
        <button class="tool" aria-label="列表清空"><svg class="icon"><use href="#list-g"/></svg></button>
        <button class="tool" aria-label="拾取"><svg class="icon"><use href="#cur-red"/></svg></button>
        <button class="tool" aria-label="上一个"><svg class="icon"><use href="#lines"/></svg></button>
        <button class="tool" aria-label="全选"><svg class="icon"><use href="#sheet-sel"/></svg></button>
        <button class="tool" aria-label="手动"><svg class="icon"><use href="#sheet-hand"/></svg></button>
        <button class="tool" aria-label="选项"><svg class="icon"><use href="#gear-l"/></svg></button>
        <span class="sep"></span>
        <button class="tool" aria-label="方向"><svg class="icon"><use href="#compass"/></svg></button>
        <button class="tool" aria-label="链"><svg class="icon"><use href="#pipe"/></svg></button>
        <button class="tool" aria-label="区域"><svg class="icon"><use href="#square"/></svg></button>
        <span class="select filter-all"><select aria-label="选择方式"><option>单一选择</option></select></span>
        <button class="tool" aria-label="光标"><svg class="icon"><use href="#cur-gray"/></svg></button>
        <button class="tool" aria-label="设置捕捉"><svg class="icon"><use href="#gear-gray"/></svg></button>
        <button class="tool" aria-label="运行"><svg class="icon"><use href="#play-gray"/></svg></button>
        <button class="tool" aria-label="点"><svg class="icon"><use href="#points"/></svg></button>
        <button class="tool" aria-label="端点"><svg class="icon"><use href="#line1"/></svg></button>
        <button class="tool" aria-label="中点"><svg class="icon"><use href="#line2"/></svg></button>
        <button class="tool" aria-label="圆心"><svg class="icon"><use href="#circ1"/></svg></button>
        <button class="tool" aria-label="象限点"><svg class="icon"><use href="#circ2"/></svg></button>
        <button class="tool" aria-label="样条点"><svg class="icon"><use href="#spl1"/></svg></button>
        <button class="tool" aria-label="样条"><svg class="icon"><use href="#spl2"/></svg></button>
        <button class="tool" aria-label="切点"><svg class="icon"><use href="#arc"/></svg></button>
        <button class="tool" aria-label="线上点"><svg class="icon"><use href="#line1"/></svg></button>
        <button class="tool" aria-label="面上点"><svg class="icon"><use href="#blob"/></svg></button>
        <button class="tool" aria-label="曲面点"><svg class="icon"><use href="#blob"/></svg></button>
        <span class="grip"></span>
        <button class="tool" aria-label="实体"><svg class="icon"><use href="#cube-gold"/></svg></button>
        <button class="tool" aria-label="擦除"><svg class="icon"><use href="#eraser"/></svg></button>
        <button class="tool" aria-label="显示"><svg class="icon"><use href="#monitor-b"/></svg></button>
        <button class="tool" aria-label="编辑草图"><svg class="icon"><use href="#target-p"/></svg></button>
        <button class="tool" aria-label="造型"><svg class="icon"><use href="#cube"/></svg></button>
        <button class="tool" aria-label="面"><svg class="icon"><use href="#cube-half"/></svg></button>
        <button class="tool" aria-label="曲线测量"><svg class="icon"><use href="#wave-r"/></svg></button>
        <button class="tool" aria-label="对齐"><svg class="icon"><use href="#pillar1"/></svg></button>
        <button class="tool" aria-label="删除"><svg class="icon"><use href="#redx"/></svg></button>
        <button class="tool" aria-label="替换"><svg class="icon"><use href="#pillar2"/></svg></button>
    </div>

    <main class="workspace">
        <!-- 管理器 -->
        <aside class="manager">
            <div class="manager-title">
                <span>管理器</span>
                <button class="tool" aria-label="停靠"><svg class="icon small"><use href="#pin"/></svg></button>
                <button class="slim" aria-label="关闭管理器"><svg class="icon small"><use href="#win-x"/></svg></button>
            </div>
            <div class="manager-body">
                <div class="side-tabs">
                    <button class="side-tab active" aria-label="历史管理"><svg><use href="#tree-tab"/></svg></button>
                    <button class="side-tab" aria-label="装配管理"><svg><use href="#box-tab"/></svg></button>
                    <button class="side-tab" aria-label="视图管理"><svg><use href="#img-tab"/></svg></button>
                    <button class="side-tab" aria-label="角色管理"><svg><use href="#user-tab"/></svg></button>
                </div>
                <div class="tree-panel">
                    <div class="tree-filter">
                        <span class="select"><select aria-label="显示"><option>显示常用</option></select></span>
                        <input type="text" aria-label="搜索节点">
                        <button aria-label="筛选"><svg class="icon"><use href="#funnel"/></svg></button>
                    </div>
                    <div class="tree-scroll">
                        <table class="tree">
                            <thead>
                                <tr><th>特征节点</th><th class="blank"></th></tr>
                            </thead>
                            <tbody>
                                <tr><td><div class="node level-1"><i class="chevron"></i><svg class="icon"><use href="#nodes"/></svg>山涧果子</div></td><td></td></tr>
                                <tr><td><div class="node level-2"><i class="chevron"></i><svg class="icon"><use href="#folder"/></svg>历史</div></td><td></td></tr>
                                <tr><td><div class="node level-3"><input type="checkbox" id="csys" checked><label for="csys"><svg class="icon"><use href="#csys-t"/></svg>默认CSYS</label></div></td><td></td></tr>
                                <tr><td><div class="node level-3 stop"><svg class="icon"><use href="#stop"/></svg>----- 建模停止 -----</div></td><td></td></tr>
                            </tbody>
                        </table>
                    </div>
                    <button class="replay"><i class="tri-right"></i>回放</button>
                </div>
            </div>
        </aside>

        <!-- 绘图区 -->
        <section class="document">
            <div class="doc-tabs">
                <div class="doc-tab">山涧果子.Z3PRT<button class="slim" aria-label="关闭标签"><svg class="icon"><use href="#tab-x"/></svg></button></div>
                <button class="tool" aria-label="新建标签"><svg class="icon"><use href="#tab-plus"/></svg></button>
                <button class="slim tabs-menu" aria-label="标签列表"><svg class="icon"><use href="#menu-r"/></svg></button>
            </div>
            <div class="viewport">
                <p class="hint">&lt;单击右键&gt;环境相关选项.<br>&lt;Shift +鼠标右键&gt;显示选择过滤器.</p>
                <div class="view-bar">
                    <button class="tool" aria-label="退出"><svg class="icon"><use href="#exit"/></svg></button>
                    <button class="tool" aria-label="基准面"><svg class="icon"><use href="#csys-v"/></svg></button><span class="caret"></span>
                    <button class="tool" aria-label="清除"><svg class="icon"><use href="#eraser"/></svg></button>
                    <button class="tool" aria-label="对齐平面"><svg class="icon"><use href="#cube-top"/></svg></button>
                    <button class="tool" aria-label="着色"><svg class="icon"><use href="#cube"/></svg></button><span class="caret"></span>
                    <button class="tool" aria-label="线框"><svg class="icon"><use href="#cube-line"/></svg></button><span class="caret"></span>
                    <button class="tool" aria-label="网格"><svg class="icon"><use href="#orange"/></svg></button><span class="caret"></span>
                    <button class="tool" aria-label="剖面"><svg class="icon"><use href="#tealring"/></svg></button><span class="caret"></span>
                    <button class="tool" aria-label="旋转中心"><svg class="icon"><use href="#cross"/></svg></button><span class="caret"></span>
                    <button class="tool" aria-label="缩放全部"><svg class="icon"><use href="#fit"/></svg></button>
                    <button class="tool" aria-label="测量"><svg class="icon"><use href="#measure"/></svg></button><span class="caret"></span>
                    <button class="tool" aria-label="背景"><svg class="icon"><use href="#monitor-v"/></svg></button><span class="caret"></span>
                    <button class="tool" aria-label="线条颜色"><svg class="icon"><use href="#black"/></svg></button>
                    <button class="tool" aria-label="面颜色"><svg class="icon"><use href="#cyan"/></svg></button>
                    <button class="tool" aria-label="图层"><svg class="icon"><use href="#layers"/></svg></button><span class="caret"></span>
                    <div class="layer">
                        <svg class="icon"><use href="#bulb"/></svg>
                        <svg class="icon small"><use href="#sun"/></svg>
                        <span class="select"><select aria-label="图层"><option>图层0000</option></select></span>
                    </div>
                </div>

                <svg class="axes" viewBox="0 0 230 420">
                    <!-- 基准坐标系 -->
                    <g fill="rgba(180,150,120,.18)" stroke="#a0640a">
                        <path d="M56 182L65 110 112 94 103 166z"/>
                        <path d="M56 182L65 110 126 133 117 205z"/>
                        <path d="M56 182L103 166 164 189 117 205z"/>
                    </g>
                    <path d="M66 100L73 48M126 160l20-8M147 218l26 9" stroke="#a0640a"/>
                    <path d="M56 182l11-92" stroke="#6a4a90" stroke-width="2"/>
                    <path d="M56 182l62-21" stroke="#6a8018" stroke-width="2"/>
                    <path d="M56 182l80 30" stroke="#d03c14" stroke-width="2"/>
                    <path d="M69 72l-6 17q4 2 8 1z" fill="#2a2af0"/>
                    <path d="M69 72l2 18-2 0z" fill="#101080"/>
                    <path d="M73 39l-5 14h7z" fill="#f0a818"/>
                    <path d="M73 39l0 14h3z" fill="#3a2404"/>
                    <path d="M127 158l-13-1-1 8 4 1z" fill="#0c5a10"/>
                    <circle cx="117" cy="161" r="4" fill="#22a822"/>
                    <path d="M149 150l-11 0 1 6z" fill="#402604"/>
                    <circle cx="139" cy="153" r="3.500" fill="#b06c10"/>
                    <path d="M148 218l-12-10-4 6z" fill="#ff2020"/>
                    <path d="M148 218l-16-4 2 2z" fill="#800"/>
                    <path d="M177 228l-12-8-3 5z" fill="#f0a818"/>
                    <path d="M177 228l-15-3 1 2z" fill="#3a2404"/>
                    <g fill="#a0640a" font-size="18">
                        <text x="70" y="30">Z</text>
                        <text x="153" y="153">Y</text>
                        <text x="184" y="240">X</text>
                    </g>
                    <!-- 视图坐标系 -->
                    <path d="M25 363l7-58" stroke="#1010f0" stroke-width="2"/>
                    <path d="M25 363l35-12" stroke="#18cc18" stroke-width="2"/>
                    <path d="M25 363l46 18" stroke="#ff0808" stroke-width="2"/>
                    <path d="M33 296l-5 13q4 2 7 0z" fill="#3030f0"/>
                    <path d="M33 296l0 14 3-1z" fill="#101080"/>
                    <path d="M69 347l-11 1 2 6z" fill="#0c5a10"/>
                    <circle cx="60" cy="351" r="3.500" fill="#22b822"/>
                    <path d="M83 384l-13-7-3 5z" fill="#ff2828"/>
                    <path d="M83 384l-16-2 2 1z" fill="#800"/>
                    <g font-size="18">
                        <text x="29" y="294" fill="#1414f4">Z</text>
                        <text x="69" y="353" fill="#22cc22">Y</text>
                        <text x="84" y="395" fill="#ff1010">X</text>
                    </g>
                </svg>
                <div class="scale">112.098mm</div>

                <!-- IGES 输入对话框 -->
                <form class="dialog" role="dialog" aria-label="IGES文件输入">
                    <div class="dialog-title">
                        <svg class="icon"><use href="#logo"/></svg>
                        <span>IGES文件输入</span>
                        <button type="button" class="tool" aria-label="反馈"><svg class="icon"><use href="#bubble"/></svg></button>
                        <button type="button" class="tool" aria-label="关闭对话框"><svg class="icon small"><use href="#win-x"/></svg></button>
                    </div>
                    <button type="button" class="dialog-tab">IGES</button>
                    <div class="dialog-panel">
                        <div class="dialog-inner">
                            <section class="box">
                                <h2><i class="tri-down"></i>输入自</h2>
                                <div class="box-body">
                                    <div class="path-row">
                                        <label for="file">文件</label>
                                        <input type="text" id="file" value=".igs" readonly>
                                        <button type="button" aria-label="浏览文件"><svg class="icon"><use href="#folder"/></svg></button>
                                        <i class="cover cover-file"></i>
                                    </div>
                                </div>
                            </section>
                            <section class="box">
                                <h2><i class="tri-down"></i>输入到</h2>
                                <div class="box-body">
                                    <div class="targets">
                                        <fieldset>
                                            <legend>输入到</legend>
                                            <label><input type="radio" name="to" checked>当前对象</label>
                                            <label class="off"><input type="radio" name="to" disabled>新建对象</label>
                                            <label><input type="radio" name="to">新建文件</label>
                                        </fieldset>
                                        <fieldset disabled>
                                            <legend>目标</legend>
                                            <label class="off"><input type="radio" name="target" checked>零件</label>
                                            <label class="off"><input type="radio" name="target">工程图</label>
                                            <label class="off"><input type="radio" name="target">草图</label>
                                        </fieldset>
                                    </div>
                                    <div class="path-row">
                                        <label for="save">保存到</label>
                                        <input type="text" id="save" readonly>
                                        <button type="button" aria-label="浏览目录"><svg class="icon"><use href="#folder"/></svg></button>
                                        <i class="cover cover-save"></i>
                                    </div>
                                </div>
                            </section>
                            <section class="box">
                                <h2><i class="tri-down"></i>通用</h2>
                                <div class="box-body options">
                                    <label class="marked"><input type="checkbox" checked>自动缝合几何体<i class="mark mark-sew"></i><b class="badge badge-two">2</b></label>
                                    <label class="off"><input type="checkbox" checked disabled>自动激活零件</label>
                                    <label><input type="checkbox">自动创建子零件</label>
                                    <label><input type="checkbox" checked>图层重命名冲突</label>
                                    <label><input type="checkbox">移除重复曲面</label>
                                    <label><input type="checkbox" checked>打断修剪边</label>
                                    <label><input type="checkbox">重置依赖关系</label>
                                    <label><input type="checkbox" checked>强制闭合</label>
                                    <label class="place" for="place">放置</label>
                                    <span class="select place"><select id="place"><option>默认CSYS</option></select></span>
                                </div>
                            </section>
                            <section class="box">
                                <h2><i class="tri-down"></i>详情</h2>
                                <div class="box-body details">
                                    <label><input type="checkbox">工程图</label>
                                    <label><input type="checkbox" checked>有界平面</label>
                                    <label><input type="checkbox">无界平面</label>
                                    <label><input type="checkbox">读取隐藏实体</label>
                                    <label><input type="checkbox">读取空图层</label>
                                </div>
                            </section>
                        </div>
                    </div>
                    <div class="dialog-buttons">
                        <button type="button">默认</button>
                        <button type="button" class="ok">确定</button>
                        <button type="button">取消</button>
                    </div>
                </form>
            </div>
        </section>
    </main>

    <!-- 状态栏 -->
    <footer class="statusbar">
        <span class="message">选择命令或实体</span>
        <div class="status-right">
            <button class="tool on" aria-label="工具面板"><svg class="icon"><use href="#st-tool"/></svg></button>
            <button class="tool" aria-label="显示面板"><svg class="icon"><use href="#st-screen"/></svg></button>
            <button class="tool" aria-label="信息面板"><svg class="icon"><use href="#st-doc"/></svg></button>
            <input type="text" aria-label="命令输入">
        </div>
    </footer>
    <div class="watermark">CSDN @山涧果子</div>
</body>
</html>
```

FILE: styles.css
```css
* {
    box-sizing: border-box;
}
body {
    margin: 0;
    height: 100vh;
    display: flex;
    flex-direction: column;
    overflow: hidden;
    position: relative;
    background: #e1e5e8;
    color: #333;
    font: 12px/16px "Noto Sans", "Noto Sans CJK SC", sans-serif;
}
button, input, select {
    font: inherit;
    color: inherit;
    margin: 0;
    padding: 0;
    border: 0;
    border-radius: 0;
    background: none;
    outline: 0;
}
svg {
    display: block;
    flex: none;
}
.defs {
    position: absolute;
}

/* 通用控件 */
.icon {
    width: 16px;
    height: 16px;
}
.icon.small {
    width: 14px;
    height: 14px;
}
.tool, .slim {
    display: flex;
    align-items: center;
    justify-content: center;
    flex: none;
    width: 24px;
    height: 23px;
}
.slim {
    width: 16px;
}
.tool.on {
    width: 23px;
    background: #ffe07c;
    border: 1px solid #c9a13c;
}
.sep {
    flex: none;
    width: 1px;
    height: 18px;
    margin: 0 3px;
    background: #b4b9c0;
}
.grip {
    flex: none;
    width: 2px;
    height: 16px;
    margin: 0 4px;
    background: repeating-linear-gradient(#667 0 2px, transparent 2px 4px);
}
.caret {
    flex: none;
    width: 12px;
    height: 4px;
    background: #333;
    clip-path: polygon(3px 0, 9px 0, 6px 4px);
}
.select {
    position: relative;
    display: block;
    background: #fff;
    border: 1px solid #b4bac4;
}
.select select {
    appearance: none;
    display: block;
    width: 100%;
    height: 100%;
    padding: 1px 0 0 2px;
    color: #000;
    opacity: 1;
}
.select::after {
    content: "";
    position: absolute;
    right: 5px;
    top: calc(50% - 2px);
    border: 3px solid transparent;
    border-top: 4px solid #333;
    border-bottom: 0;
}
.select.off {
    background: #e6e8ea;
    border-color: #d4d8dc;
}
.select.off select {
    color: #777;
}
.select.off::after {
    border-top-color: #999;
}
.tri-down {
    border: 5px solid transparent;
    border-top: 8px solid #4a5560;
    border-bottom: 0;
}
.tri-right {
    border: 5px solid transparent;
    border-left: 7px solid #4a5560;
    border-right: 0;
}

/* 标题栏和菜单 */
.titlebar {
    display: grid;
    grid-template-columns: 1fr auto 1fr;
    align-items: center;
    height: 25px;
    flex: none;
}
.quick-access {
    display: flex;
    align-items: center;
}
.logo {
    margin: 0 3px;
}
.quick-access .sep {
    margin-right: 5px;
}
.app-title {
    padding-left: 184px;
    color: #444;
}
.window-buttons {
    display: flex;
    justify-content: flex-end;
}
.menubar {
    display: flex;
    align-items: flex-end;
    height: 22px;
    flex: none;
    padding-left: 2px;
    border-bottom: 1px solid #b4bac4;
}
.file-menu {
    width: 74px;
    height: 21px;
    margin-right: 2px;
    padding-top: 2px;
    background: #2a62b8;
    border: 1px solid #1c4a94;
    color: #fff;
}
.menu {
    height: 22px;
    padding: 3px 11px 0;
    color: #444;
    white-space: nowrap;
}
.menu.active {
    margin: 0 2px -1px;
    padding: 2px 8px 0;
    background: #fcfcfc;
    border: 1px solid #b4bac4;
    border-bottom: 0;
}
.menu-right {
    display: flex;
    align-items: center;
    margin-left: auto;
    height: 21px;
}
.search {
    display: flex;
    align-items: center;
    width: 159px;
    height: 20px;
    margin: 0 3px 0 9px;
    padding: 0 7px 0 2px;
    background: #fff;
    border: 1px solid #b4bac4;
}
.search input {
    flex: 1;
    min-width: 0;
}
.search input::placeholder {
    color: #777;
    opacity: 1;
}
.wide {
    width: 28px;
}

/* 功能区 */
.ribbon {
    display: flex;
    flex: none;
    height: 94px;
    background: #fcfcfc;
    border-bottom: 1px solid #b4bac4;
}
.group {
    display: flex;
    flex-direction: column;
    justify-content: space-between;
    padding: 6px 4px 1px;
    border-right: 1px solid #d0d4da;
}
.group:first-child {
    padding-left: 9px;
    padding-right: 2px;
}
.group-items {
    display: flex;
    align-items: flex-start;
}
.cmd {
    position: relative;
    display: flex;
    flex-direction: column;
    align-items: center;
    padding: 0 6px;
    color: #222;
    white-space: nowrap;
}
.cmd svg {
    width: 32px;
    height: 32px;
    margin: 0 -4px 3px;
}
.cmd .caret {
    margin-top: 6px;
}
.group-name {
    position: relative;
    text-align: center;
    color: #5c6878;
}
.group:first-child .group-name {
    padding-right: 16px;
}
.launch {
    position: absolute;
    right: 0;
    top: 0;
}
.mark {
    position: absolute;
    border: 4px solid #f40000;
    box-shadow: 2px 2px 5px rgba(0, 0, 0, .5), inset 2px 2px 5px rgba(0, 0, 0, .4);
}
.badge {
    position: absolute;
    width: 24px;
    height: 24px;
    border: 3px solid #fff;
    border-radius: 50%;
    background: #f00;
    box-shadow: 1px 2px 4px rgba(0, 0, 0, .6);
    color: #fff;
    font-size: 13px;
    line-height: 18px;
    text-align: center;
    z-index: 1;
}
.mark-import {
    left: -7px;
    top: -6px;
    width: 49px;
    height: 64px;
}
.badge-one {
    left: 2px;
    top: 62px;
}

/* 选择工具栏 */
.toolbar {
    display: flex;
    align-items: center;
    flex: none;
    height: 30px;
    padding-top: 1px;
}
.filter-all {
    width: 97px;
    height: 21px;
    margin: 0 1px;
}
.filter-part {
    width: 130px;
    height: 21px;
    margin: 0 1px;
}

/* 管理器 */
.workspace {
    display: flex;
    flex: 1;
    min-height: 0;
}
.manager {
    display: flex;
    flex-direction: column;
    width: 357px;
    flex: none;
}
.manager-title {
    display: flex;
    align-items: center;
    height: 21px;
    padding: 0 4px;
}
.manager-title span {
    margin-right: auto;
}
.manager-body {
    display: flex;
    flex: 1;
    min-height: 0;
}
.side-tabs {
    display: flex;
    flex-direction: column;
    flex: none;
    width: 31px;
    padding-left: 2px;
}
.side-tab {
    display: flex;
    align-items: center;
    justify-content: center;
    height: 47px;
}
.side-tab svg {
    width: 24px;
    height: 24px;
}
.side-tab.active {
    background: #fcfcfc;
    border: 1px solid #b4bac4;
    border-right: 0;
}
.tree-panel {
    display: flex;
    flex-direction: column;
    flex: 1;
    min-width: 0;
    padding: 1px;
    border: 1px solid #b4bac4;
    background: #e1e5e8;
}
.tree-filter {
    display: flex;
    height: 25px;
    background: #fff;
    border: 1px solid #b4bac4;
}
.tree-filter .select {
    width: 149px;
    border-width: 0 1px 0 0;
}
.tree-filter > input {
    flex: 1;
    min-width: 0;
}
.tree-filter button {
    display: flex;
    align-items: center;
    justify-content: center;
    width: 23px;
    border-left: 1px solid #b4bac4;
}
.tree-scroll {
    flex: 1;
    border: 1px solid #b4bac4;
    border-top: 0;
    background: repeating-linear-gradient(#fff 0 18px, #f5f5f5 18px 36px) 0 23px;
}
.tree {
    width: 100%;
    border-spacing: 0;
    table-layout: fixed;
    color: #000;
}
.tree th {
    height: 23px;
    padding: 1px 3px 0;
    background: linear-gradient(#eceff5, #f4f6f9);
    border-right: 1px solid #a9afba;
    border-bottom: 1px solid #a9afba;
    font-weight: normal;
    text-align: left;
}
.tree th.blank {
    width: 92px;
}
.tree td {
    height: 18px;
    padding: 0;
    line-height: 17px;
}
.tree td:first-child {
    border-right: 1px solid #d0d4dc;
    border-bottom: 1px solid #ececec;
}
.node, .node label {
    display: flex;
    align-items: center;
    gap: 4px;
    height: 17px;
    white-space: pre;
}
.node .icon {
    width: 15px;
    height: 15px;
}
.level-1 {
    padding-left: 2px;
}
.level-2 {
    padding-left: 16px;
}
.level-3 {
    padding-left: 45px;
}
.node label {
    gap: 2px;
}
.stop {
    color: #f01010;
}
.chevron {
    width: 6px;
    height: 6px;
    margin: 0 3px 3px 2px;
    border: solid #333;
    border-width: 0 2px 2px 0;
    transform: rotate(45deg);
}
.node input {
    appearance: none;
    width: 13px;
    height: 13px;
    margin-right: 2px;
    background: #fff;
    border: 1px solid #000;
}
.replay {
    display: flex;
    align-items: center;
    gap: 7px;
    height: 24px;
    padding: 2px 0 0 5px;
    background: #fcfcfc;
    border: 1px solid #b4bac4;
    font-weight: bold;
}

/* 绘图区 */
.document {
    display: flex;
    flex-direction: column;
    flex: 1;
    min-width: 0;
    padding: 0 1px 0 4px;
}
.doc-tabs {
    display: flex;
    align-items: center;
    height: 22px;
}
.doc-tab {
    display: flex;
    align-items: center;
    gap: 3px;
    height: 23px;
    width: 148px;
    padding-left: 31px;
    background: #fcfcfc;
    border: 1px solid #b4bac4;
    border-bottom: 0;
    color: #000;
    white-space: nowrap;
    z-index: 1;
}
.tabs-menu {
    margin-left: auto;
}
.viewport {
    position: relative;
    flex: 1;
    border: 1px solid #b4bac4;
    background: linear-gradient(#fefefe, #9e9e9e);
}
.hint {
    position: absolute;
    left: 20px;
    top: 5px;
    margin: 0;
    line-height: 14px;
    color: #111;
}
.view-bar {
    display: flex;
    align-items: center;
    justify-content: center;
    padding-top: 2px;
}
.view-bar .tool {
    width: 25px;
}
.layer {
    display: flex;
    align-items: center;
    width: 115px;
    height: 22px;
    padding-left: 4px;
    background: #fff;
    border: 1px solid #b4bac4;
}
.layer .select {
    flex: 1;
    height: 100%;
    border: 0;
}
.axes {
    position: absolute;
    left: 68px;
    top: 336px;
    width: 230px;
    height: 420px;
    fill: none;
}
.scale {
    position: absolute;
    left: 3px;
    bottom: 0;
    color: #111;
    font-size: 17px;
    line-height: 20px;
}

/* 对话框 */
.dialog {
    position: absolute;
    left: 415px;
    top: 77px;
    width: 388px;
    padding: 0 6px 6px;
    background: #e8eaec;
    border: 1px solid #5f6b76;
    color: #000;
}
.dialog-title {
    display: flex;
    align-items: center;
    gap: 4px;
    height: 36px;
    margin-bottom: 2px;
    padding-right: 2px;
    color: #444;
}
.dialog-title span {
    margin-right: auto;
}
.dialog-title .icon {
    margin-left: 1px;
}
.dialog-tab {
    position: relative;
    display: block;
    width: 47px;
    height: 22px;
    background: #fcfcfc;
    border: 1px solid #b4bac4;
    border-bottom: 0;
    z-index: 1;
}
.dialog-panel {
    padding: 1px;
    margin-top: -1px;
    border: 1px solid #b4bac4;
}
.dialog-inner {
    display: flex;
    flex-direction: column;
    gap: 2px;
    padding: 2px 9px 66px;
    background: #dce1e9;
    border: 1px solid #b4bac4;
}
.box {
    border: 1px solid #b4bac4;
}
.box h2 {
    display: flex;
    align-items: center;
    gap: 4px;
    height: 23px;
    margin: 0;
    padding: 2px 0 0 4px;
    background: #fcfcfc;
    border-bottom: 1px solid #b4bac4;
    color: #333;
    font-size: 12px;
}
.box-body {
    padding: 2px 8px;
}
.path-row {
    position: relative;
    display: flex;
    align-items: center;
    height: 23px;
}
.path-row label {
    width: 55px;
    padding-top: 2px;
}
.path-row input {
    flex: 1;
    min-width: 0;
    height: 22px;
    padding: 1px 3px 0 0;
    background: #eee;
    border: 1px solid #b4bac4;
    color: #777;
    text-align: right;
}
.path-row button {
    display: flex;
    align-items: center;
    justify-content: center;
    width: 28px;
    height: 24px;
    margin-left: 7px;
    background: #fcfcfc;
    border: 1px solid #b4bac4;
}
.cover {
    position: absolute;
    height: 19px;
    background: #fff;
    border-radius: 10px;
}
.cover-file {
    left: 46px;
    top: 3px;
    width: 232px;
}
.cover-save {
    left: 51px;
    top: 1px;
    width: 203px;
}
.targets {
    display: grid;
    grid-template-columns: 1fr 1fr;
    gap: 7px;
    margin-bottom: 7px;
}
fieldset {
    min-width: 0;
    margin: 0;
    padding: 9px 8px 7px;
    border: 1px solid #9a9fa6;
    box-shadow: 1px 1px 0 #fff;
}
legend {
    padding: 0 2px;
    margin-left: -3px;
    background: #dce1e9;
}
fieldset label, .options label, .details label {
    display: flex;
    align-items: center;
    gap: 5px;
    height: 20px;
}
fieldset label {
    gap: 6px;
}
.off {
    color: #888;
}
.dialog input[type="radio"] {
    appearance: none;
    width: 12px;
    height: 12px;
    border: 1px solid #8e9298;
    border-radius: 50%;
    background: radial-gradient(#d8dadc 40%, #fff 45%);
}
.dialog input[type="radio"]:checked {
    border-color: #8a6a48;
    background: radial-gradient(#ffb050 10%, #d06a10 38%, #fff 48%);
}
.dialog input[type="radio"]:disabled {
    border-color: #b4b8bc;
    background: radial-gradient(#eceeef 40%, #fff 45%);
}
.dialog input[type="radio"]:checked:disabled {
    background: radial-gradient(#f0c890 30%, #fff 48%);
}
.dialog input[type="checkbox"] {
    appearance: none;
    width: 13px;
    height: 13px;
    border: 1px solid #8e9298;
    background: linear-gradient(135deg, #b8c0ca, #f0f2f4) content-box #f0f2f4;
    padding: 2px;
}
.dialog input[type="checkbox"]:checked::after,
.node input:checked::after {
    content: "";
    display: block;
    width: 4px;
    height: 8px;
    border: solid #47648a;
    border-width: 0 2px 2px 0;
    transform: rotate(40deg);
}
.dialog input[type="checkbox"]:checked::after {
    margin: -2px 0 0 2px;
}
.node input:checked::after {
    margin: 0 0 0 4px;
    border-color: #18a018;
}
.options {
    display: grid;
    grid-template-columns: 1fr 1fr;
    padding-bottom: 1px;
}
.marked {
    position: relative;
}
.mark-sew {
    left: -14px;
    top: -4px;
    width: 147px;
    height: 29px;
    border-width: 3px;
}
.badge-two {
    left: 83px;
    top: -35px;
}
.options .place {
    height: 21px;
    margin-top: 5px;
}
.details {
    padding: 1px 8px 0;
}
.dialog-buttons {
    display: flex;
    gap: 4px;
    margin-top: 4px;
}
.dialog-buttons button {
    width: 75px;
    height: 23px;
    padding-top: 1px;
    background: #fcfcfc;
    border: 1px solid #b4bac4;
}
.dialog-buttons .ok {
    margin-left: auto;
}

/* 状态栏 */
.statusbar {
    display: flex;
    align-items: center;
    flex: none;
    height: 31px;
    border-bottom: 2px solid #b4c4c6;
}
.message {
    padding: 2px 0 0 5px;
}
.status-right {
    display: flex;
    align-items: center;
    gap: 5px;
    margin-left: auto;
    padding: 0 2px 0 15px;
    border-left: 1px solid #8a9096;
}
.status-right input {
    width: 350px;
    height: 22px;
    background: #fff;
    border: 1px solid #b4bac4;
}
.watermark {
    position: absolute;
    right: 5px;
    bottom: 11px;
    color: rgba(225, 225, 225, .85);
    font-family: "Noto Sans CJK SC", sans-serif;
    font-size: 38px;
    font-weight: 300;
    line-height: 48px;
    text-shadow: 1px 1px 1px rgba(90, 90, 90, .7);
    pointer-events: none;
}
```
